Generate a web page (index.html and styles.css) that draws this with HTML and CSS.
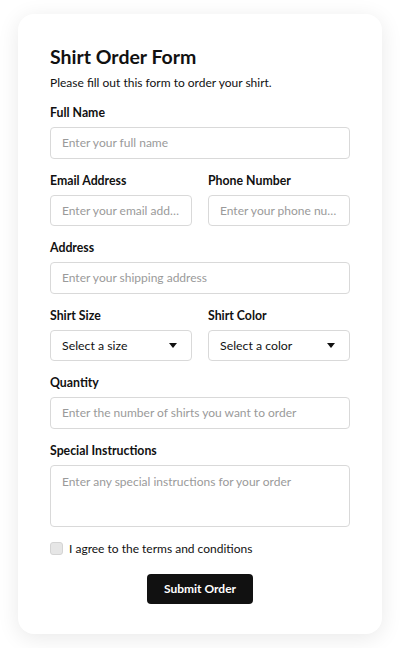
FILE: index.html
```html
<!DOCTYPE html>
<html>
<head>
<meta charset="utf-8">
<link rel="stylesheet" href="styles.css">
</head>
<body>
<div class="card">
  <h1 class="title">Shirt Order Form</h1>
  <p class="subtitle">Please fill out this form to order your shirt.</p>
  <form class="form">
    <div class="field">
      <label class="label">Full Name</label>
      <input class="input" type="text" placeholder="Enter your full name">
    </div>
    <div class="row">
      <div class="field">
        <label class="label">Email Address</label>
        <input class="input" type="text" placeholder="Enter your email address">
      </div>
      <div class="field">
        <label class="label">Phone Number</label>
        <input class="input" type="text" placeholder="Enter your phone number">
      </div>
    </div>
    <div class="field">
      <label class="label">Address</label>
      <input class="input" type="text" placeholder="Enter your shipping address">
    </div>
    <div class="row">
      <div class="field">
        <label class="label">Shirt Size</label>
        <div class="select"><span>Select a size</span><svg class="caret" width="8" height="5" viewBox="0 0 8 5"><path d="M0 0h8L4 5z" fill="#111"/></svg></div>
      </div>
      <div class="field">
        <label class="label">Shirt Color</label>
        <div class="select"><span>Select a color</span><svg class="caret" width="8" height="5" viewBox="0 0 8 5"><path d="M0 0h8L4 5z" fill="#111"/></svg></div>
      </div>
    </div>
    <div class="field">
      <label class="label">Quantity</label>
      <input class="input" type="text" placeholder="Enter the number of shirts you want to order">
    </div>
    <div class="field">
      <label class="label">Special Instructions</label>
      <textarea class="input textarea" placeholder="Enter any special instructions for your order"></textarea>
    </div>
    <label class="check"><span class="box"></span>I agree to the terms and conditions</label>
    <div class="actions"><button type="button" class="btn">Submit Order</button></div>
  </form>
</div>
</body>
</html>
```
FILE: styles.css
```css
* { box-sizing: border-box; }
html, body { margin: 0; padding: 0; }
body {
  background: #fff;
  font-family: "Lato", "Noto Sans", sans-serif;
  color: #111;
  padding: 14px 18px;
}
.card {
  width: 364px;
  height: 620px;
  background: #fff;
  border-radius: 16px;
  box-shadow: 0 4px 22px rgba(0,0,0,0.09);
  padding: 31px 32px 30px;
}
.title {
  margin: 0;
  font-size: 19.5px;
  line-height: 24px;
  font-weight: 700;
}
.subtitle {
  margin: 5px 0 0;
  font-size: 12px;
  line-height: 18px;
}
.form { margin-top: 11px; display: flex; flex-direction: column; }
.field { display: flex; flex-direction: column; margin-bottom: 12px; min-width: 0; }
.row { display: grid; grid-template-columns: 1fr 1fr; column-gap: 16px; }
.label {
  font-size: 12.3px;
  font-weight: 700;
  line-height: 20px;
  margin-bottom: 4px;
}
.input {
  width: 100%;
  height: 31.5px;
  border: 1px solid #d9d9d9;
  border-radius: 4px;
  padding: 0 11px;
  font-family: inherit;
  font-size: 12px;
  color: #111;
  outline: none;
  text-overflow: ellipsis;
  background: #fff;
}
.input::placeholder { color: #9a9a9a; }
.textarea {
  height: 62px;
  padding: 7px 11px;
  resize: none;
  line-height: 18px;
}
.select {
  height: 31.5px;
  border: 1px solid #d9d9d9;
  border-radius: 4px;
  padding: 0 14px 0 11px;
  display: flex;
  align-items: center;
  justify-content: space-between;
  font-size: 12.3px;
}
.check {
  display: flex;
  align-items: center;
  gap: 6px;
  font-size: 12px;
  line-height: 18px;
  margin-top: 1px;
}
.box {
  width: 13px;
  height: 13px;
  border: 1px solid #d4d4d4;
  background: #e6e6e6;
  border-radius: 3px;
}
.actions { display: flex; justify-content: center; margin-top: 16px; }
.btn {
  width: 106px;
  height: 30px;
  background: #111;
  color: #fff;
  border: none;
  border-radius: 4px;
  font-family: inherit;
  font-weight: 700;
  font-size: 12px;
}
```
